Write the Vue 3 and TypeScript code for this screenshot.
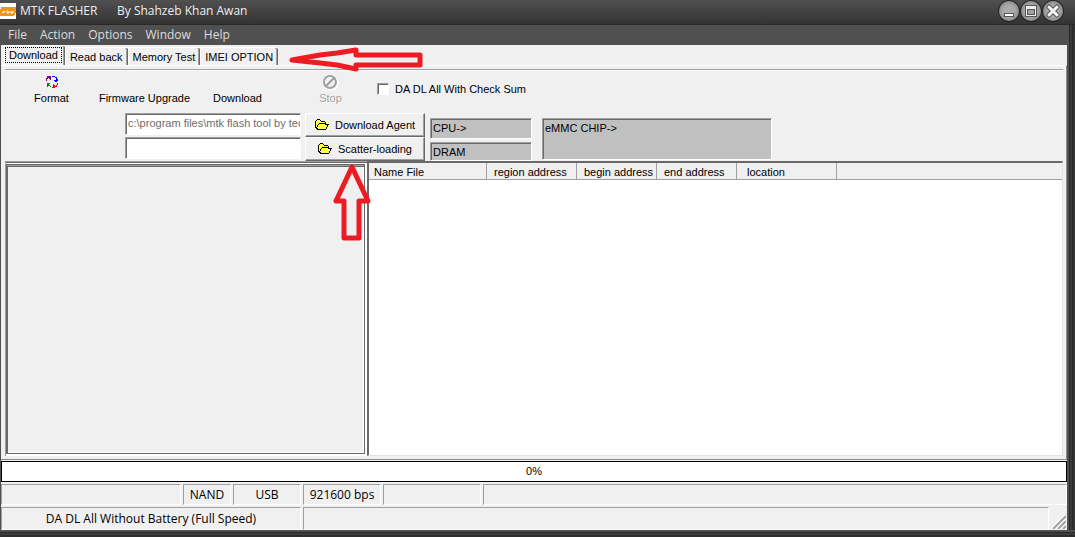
<script setup lang="ts">
import { ref } from 'vue'

const menus = ['File', 'Action', 'Options', 'Window', 'Help']
const tabs = ['Download', 'Read back', 'Memory Test', 'IMEI OPTION']
const active = ref(0)
const checksum = ref(false)
const agentPath = ref('c:\\program files\\mtk flash tool by tech')
const scatterPath = ref('')
const progress = ref(0)
</script>

<template>
  <div class="window">
    <header class="titlebar">
      <svg class="logo" width="16" height="16" viewBox="0 0 16 16" aria-hidden="true">
        <rect width="16" height="16" fill="#fff" />
        <path d="M1 4H16V10H15V12H14V13H0V6H1Z" fill="#f0931e" />
        <path d="M2 10L4 8V10M8 8H7V10H9V8M11 8V10H13V8" fill="none" stroke="#fff" />
      </svg>
      <h1>MTK FLASHER</h1>
      <span class="author">By Shahzeb Khan Awan</span>
      <div class="controls">
        <button aria-label="Minimize">
          <svg width="20" height="20" viewBox="0 0 20 20"><path d="M5 14H15" stroke="#555" stroke-width="4" /><path d="M6 14H14" stroke="#fff" stroke-width="2" /></svg>
        </button>
        <button aria-label="Maximize">
          <svg width="20" height="20" viewBox="0 0 20 20"><rect x="4" y="4" width="12" height="12" fill="#555" /><path d="M5 5H15V15H5Z" fill="#eee" /><rect x="6" y="8" width="8" height="6" fill="#555" /><rect x="7" y="9" width="6" height="4" fill="#a0a0a0" /></svg>
        </button>
        <button aria-label="Close">
          <svg width="20" height="20" viewBox="0 0 20 20"><path d="M6 6L14 14M14 6L6 14" stroke="#585858" stroke-width="5" stroke-linecap="round" /><path d="M6 6L14 14M14 6L6 14" stroke="#f4f4f4" stroke-width="3" stroke-linecap="round" /></svg>
        </button>
      </div>
    </header>

    <nav class="menu">
      <button v-for="m in menus" :key="m">{{ m }}</button>
    </nav>

    <main class="client">
      <div class="tabs" role="tablist">
        <button
          v-for="(t, i) in tabs"
          :key="t"
          role="tab"
          :aria-selected="active === i"
          :class="{ active: active === i }"
          @click="active = i"
        >
          <span>{{ t }}</span>
        </button>
      </div>

      <section class="page">
        <div class="toolbar">
          <button class="tool">
            <svg width="12" height="12" viewBox="0 0 12 12" shape-rendering="crispEdges" aria-hidden="true">
              <path d="M1 0H5V4H4V3H3V2H2V3H1V5H0V2H1Z" fill="#800080" />
              <path d="M6 0H9V1H11V3H12V5H11V6H9V5H8V4H10V2H9V1H6Z" fill="#0000ff" />
              <path d="M1 7H4V8H3V9H4V10H5V11H4V10H2V11H1Z" fill="#008000" />
              <path d="M11 7H12V9H11V11H9V12H6V11H7V8H8V9H9V10H10V9H11Z" fill="#ff0000" />
            </svg>
            <span>Format</span>
          </button>
          <button class="tool"><span>Firmware Upgrade</span></button>
          <button class="tool"><span>Download</span></button>
          <button class="tool" disabled>
            <svg width="18" height="16" viewBox="0 0 18 16" aria-hidden="true">
              <circle cx="9" cy="9" r="6.500" fill="none" stroke="#fff" stroke-width="2" />
              <path d="M2 8a6 6 0 1 0 12 0a6 6 0 1 0 -12 0M4 12L12 4" fill="none" stroke="#a0a0a0" stroke-width="2" />
            </svg>
            <span>Stop</span>
          </button>
          <label class="check"><input v-model="checksum" type="checkbox" />DA DL All With Check Sum</label>
        </div>

        <div class="files">
          <div class="paths">
            <input v-model="agentPath" type="text" aria-label="Download agent path" class="dim" />
            <input v-model="scatterPath" type="text" aria-label="Scatter file path" />
          </div>
          <div class="loaders">
            <button v-for="b in ['Download Agent', 'Scatter-loading']" :key="b">
              <svg width="15" height="12" viewBox="0 0 15 12" shape-rendering="crispEdges" aria-hidden="true">
                <path d="M1 2H2V1H5V2H6V3H10V5H14V6H13V8H12V10H2V9H1Z" fill="#ffff50" />
                <path d="M2 0H5V1H6V2H10V3H11V5H14V6H13V8H12V10H11V11H2V10H1V9H0V2H1V1H2ZM2 1V2H1V8H2V6H3V5H4V4H10V3H6V2H5V1ZM4 5V6H3V8H2V9H3V10H11V8H12V6H10V5Z" fill="#000" fill-rule="evenodd" />
              </svg>
              {{ b }}
            </button>
          </div>
          <div class="chips">
            <div class="info">CPU-&gt;</div>
            <div class="info">DRAM</div>
          </div>
          <div class="info emmc">eMMC CHIP-&gt;</div>
        </div>

        <div class="split">
          <div class="side"><div class="inner"></div></div>
          <div class="list">
            <table>
              <colgroup>
                <col class="c-name" /><col class="c-region" /><col class="c-addr" /><col class="c-addr" /><col class="c-loc" /><col />
              </colgroup>
              <thead>
                <tr>
                  <th>Name File</th>
                  <th>region address</th>
                  <th>begin address</th>
                  <th>end address</th>
                  <th class="wide">location</th>
                  <th></th>
                </tr>
              </thead>
            </table>
          </div>
        </div>
      </section>

      <div class="progress" role="progressbar" :aria-valuenow="progress" aria-label="Progress">{{ progress }}%</div>

      <footer>
        <div class="status first">
          <div></div><div>NAND</div><div>USB</div><div>921600 bps</div><div></div><div></div>
        </div>
        <div class="status second">
          <div>DA DL All Without Battery (Full Speed)</div><div></div>
          <svg class="grip" width="14" height="14" viewBox="0 0 14 14" aria-hidden="true">
            <path d="M0 14L14 0M5 14L14 5M10 14L14 10" stroke="#fff" stroke-width="3" />
            <path d="M1 14L14 1M6 14L14 6M11 14L14 11" stroke="#a0a0a0" stroke-width="2" />
          </svg>
        </div>
      </footer>
    </main>

    <svg class="arrow left" width="136" height="26" viewBox="0 0 136 26" aria-hidden="true">
      <path d="M5 13L33 8L50 6L69 3V8H133V18H69V22L50 18L33 16Z" />
    </svg>
    <svg class="arrow up" width="40" height="80" viewBox="0 0 40 80" aria-hidden="true">
      <path d="M20 5L4 39H12V76H27V39H36Z" />
    </svg>
  </div>
</template>

<style>
body { margin: 0; }
</style>

<style scoped>
* { box-sizing: border-box; }
.window {
  position: relative;
  display: flex;
  flex-direction: column;
  min-height: 100vh;
  padding: 0 8px 7px 1px;
  background: linear-gradient(to left, #333 0 2px, #292929 2px 3px, #3a3a3a 3px 5px, #292929 5px 6px, #505050 6px);
  font: 11px/14px "Liberation Sans", Arial, sans-serif;
  color: #000;
}
.window::after {
  content: "";
  position: absolute;
  inset: auto 0 0;
  height: 7px;
  background: linear-gradient(#505050 0 2px, #292929 2px 3px, #3c3c3c 3px 5px, #2d2d2d 5px);
}
button, input { font: inherit; color: inherit; margin: 0; padding: 0; border: 0; background: none; }
.titlebar {
  display: flex;
  align-items: center;
  height: 25px;
  margin: 0 -8px 0 -1px;
  padding: 0 12px 3px 0;
  border-bottom: 1px solid #292929;
  background: linear-gradient(#505050, #333);
  color: #eee;
  font: 12px/16px "Open Sans", "Noto Sans", sans-serif;
}
.logo { margin-right: 4px; }
h1 { margin: 0; font: inherit; width: 97px; white-space: nowrap; }
.controls { display: flex; gap: 2px; margin-left: auto; }
.controls button {
  width: 20px;
  height: 20px;
  border-radius: 50%;
  background: radial-gradient(circle, #aaa 0 40%, #929292 65%, #666);
  box-shadow: 0 0 0 1px #262626;
}
.controls svg { display: block; }
.menu {
  display: flex;
  align-items: center;
  gap: 13px;
  height: 20px;
  padding-left: 7px;
  background: #505050;
  color: #ddd;
  font: 12px/16px "Open Sans", "Noto Sans", sans-serif;
}
.client { flex: 1; display: flex; flex-direction: column; background: #f0f0f0; }
.tabs { display: flex; align-items: flex-end; height: 20px; padding-left: 3px; }
.tabs button {
  height: 18px;
  padding: 0 5px 0 4px;
  border: solid #fff;
  border-width: 1px 0 0 1px;
  border-radius: 2px 2px 0 0;
  box-shadow: inset -1px 0 #696969, inset -2px 0 #a0a0a0;
  white-space: nowrap;
}
.tabs button.active { height: 20px; padding: 0 3px 1px 0; }
.tabs .active span { display: block; padding: 0 3px; border: 1px dotted #000; }
.page {
  flex: 1;
  display: flex;
  flex-direction: column;
  padding: 3px 3px 3px 4px;
  border: solid;
  border-width: 1px 1px 1px 0;
  border-color: #fff #8a8a8a #8a8a8a;
}
.toolbar { display: flex; border-top: 1px solid #a0a0a0; box-shadow: inset 0 1px #fff; height: 44px; }
.tool {
  display: flex;
  flex-direction: column;
  align-items: center;
  justify-content: flex-end;
  gap: 3px;
  width: 93px;
  padding-bottom: 8px;
  white-space: nowrap;
}
.tool:disabled { gap: 1px; color: #a0a0a0; text-shadow: 1px 1px #fff; }
.check { display: flex; align-items: center; gap: 6px; height: 37px; }
.check input, .paths input, .info { border: 1px solid; border-color: #a0a0a0 #fff #fff #a0a0a0; box-shadow: inset 1px 1px #696969; }
.check input { appearance: none; width: 12px; height: 12px; background: #fff; }
.check input:checked { background: #444; }
.files { display: flex; height: 48px; padding-left: 120px; }
.paths { display: grid; gap: 2px; align-content: start; width: 176px; margin-right: 4px; }
.paths input { width: 100%; height: 22px; padding: 0 0 3px 2px; background: #fff; }
.paths .dim { color: #6d6d6d; }
.loaders { width: 120px; margin-right: 5px; }
.loaders button {
  display: flex;
  align-items: center;
  justify-content: center;
  gap: 5px;
  width: 100%;
  height: 24px;
  border: 1px solid;
  border-color: #fff #696969 #696969 #fff;
  box-shadow: inset -1px -1px #a0a0a0;
}
.chips { display: grid; grid-template-rows: 21px 19px; gap: 3px; width: 102px; padding-top: 5px; margin-right: 10px; align-content: start; }
.info { padding: 2px; background: #c0c0c0; }
.emmc { width: 230px; height: 42px; margin-top: 5px; }
.split { flex: 1; display: flex; }
.side {
  width: 362px;
  padding: 2px 2px 2px 0;
  border: solid;
  border-width: 1px 0 0 1px;
  border-color: #a0a0a0 #fff #fff #a0a0a0;
  box-shadow: inset 0 1px #696969;
  background: #fff;
}
.inner {
  height: 100%;
  border: 1px solid #696969;
  box-shadow: inset 0 1px #a0a0a0, inset 1px 2px #696969, inset -1px -1px #fff;
  background: #f0f0f0;
}
.list { flex: 1; border: solid; border-width: 2px 1px 1px 2px; border-color: #696969 #e3e3e3 #e3e3e3 #696969; background: #fff; }
table { width: 100%; table-layout: fixed; border-collapse: separate; border-spacing: 0; }
.c-name { width: 118px; }
.c-region { width: 90px; }
.c-addr { width: 80px; }
.c-loc { width: 100px; }
th { height: 17px; padding: 2px 0 0 7px; border-right: 1px solid #a0a0a0; border-bottom: 1px solid #a0a0a0; background: #f0f0f0; font-weight: normal; text-align: left; line-height: 14px; white-space: nowrap; }
th:first-child { padding-left: 5px; }
th:last-child { border-right: 0; }
th.wide { padding-left: 10px; }
.progress { height: 21px; margin-top: 1px; border: 1px solid #000; background: #fff; line-height: 18px; text-align: center; }
footer { position: relative; padding-top: 2px; font: 12px/19px "Open Sans", "Noto Sans", sans-serif; }
.status { display: grid; column-gap: 2px; text-align: center; white-space: nowrap; }
.status div { border: 1px solid; border-color: #a0a0a0 #fff #fff #a0a0a0; }
.first { grid-template-columns: 180px 48px 68px 78px 98px 1fr; grid-auto-rows: 21px; margin-bottom: 2px; }
.second { grid-template-columns: 300px 1fr; grid-auto-rows: 23px; padding-right: 18px; }
.second div { line-height: 21px; }
.grip { position: absolute; right: 1px; bottom: 1px; }
.arrow { position: absolute; fill: none; stroke: #ed1c24; stroke-width: 5; stroke-linejoin: round; pointer-events: none; }
.left { left: 287px; top: 47px; }
.up { left: 332px; top: 162px; }
</style>
